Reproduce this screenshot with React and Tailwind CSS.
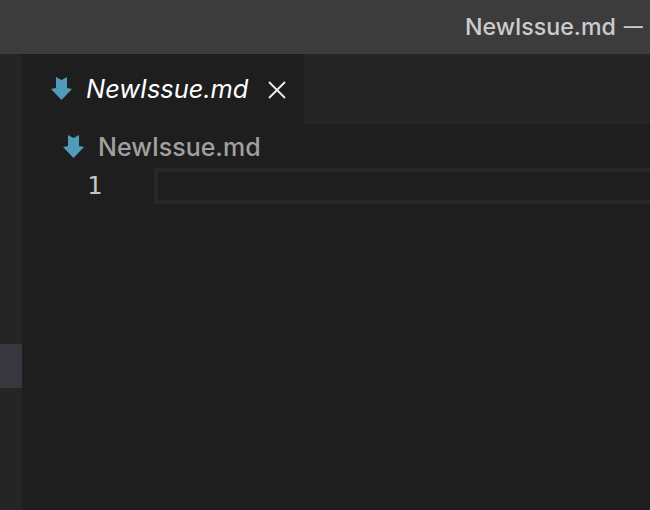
import React from 'react';

const ArrowIcon = () => (
  <svg width="21" height="23" viewBox="0 0 21 23" className="shrink-0">
    <path d="M5 0 L10.5 3 L16 0 L16 11 L21 12 L10.5 23 L0 12 L5 11 Z" fill="#519aba" />
  </svg>
);

const CloseIcon = () => (
  <svg width="18" height="18" viewBox="0 0 18 18" className="shrink-0">
    <path d="M1 1 L17 17 M17 1 L1 17" stroke="#f0f0f0" strokeWidth="1.8" fill="none" />
  </svg>
);

export default function App() {
  return (
    <div className="w-[650px] h-[510px] overflow-hidden flex flex-col bg-[#1e1e1e] font-['Inter','Liberation_Sans',sans-serif]">
      {/* Title bar */}
      <div className="h-[54px] shrink-0 bg-[#3c3c3c] flex items-center pl-[465px] whitespace-nowrap text-[23.2px] font-medium text-[#cccccc]">
        NewIssue.md
        <span className="ml-[8px] text-[19px]">—</span>
      </div>

      <div className="flex-1 flex min-h-0">
        {/* Sidebar edge */}
        <div className="w-[22px] shrink-0 bg-[#252526] pt-[290px]">
          <div className="h-[44px] bg-[#37373d]"></div>
        </div>

        <div className="flex-1 min-w-0 flex flex-col">
          {/* Tabs */}
          <div className="h-[70px] shrink-0 bg-[#252526] flex">
            <div className="w-[282px] bg-[#1e1e1e] flex items-center pl-[29px] pb-[1px]">
              <ArrowIcon />
              <span className="ml-[14px] mt-[2px] text-[25.4px] italic text-white whitespace-nowrap">NewIssue.md</span>
              <span className="ml-[20px] mt-[2px]"><CloseIcon /></span>
            </div>
          </div>

          {/* Breadcrumb */}
          <div className="h-[44px] shrink-0 flex items-center pl-[41px]">
            <ArrowIcon />
            <span className="ml-[14px] mt-[3px] text-[25px] font-medium text-[#a0a0a0] whitespace-nowrap">NewIssue.md</span>
          </div>

          {/* First editor line */}
          <div className="flex h-[36px]">
            <div className="w-[132px] shrink-0 pr-[52px] text-right font-['DejaVu_Sans_Mono',monospace] text-[25px] leading-[36px] text-[#c6c6c6]">1</div>
            <div className="flex-1 border-4 border-r-0 border-[#282828]"></div>
          </div>
        </div>
      </div>
    </div>
  );
}
